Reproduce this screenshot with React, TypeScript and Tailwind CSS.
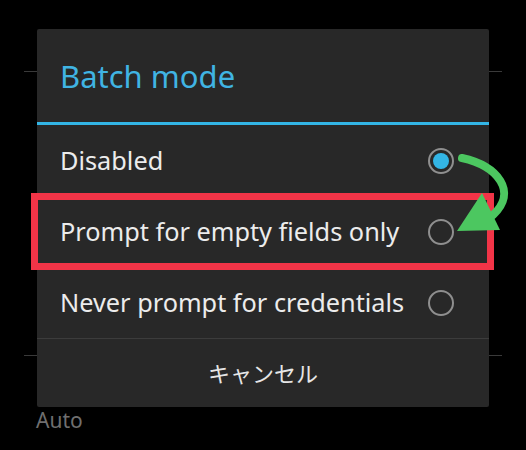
import React from "react";

const font = { fontFamily: '"Noto Sans", "Noto Sans CJK JP", sans-serif' };

function Radio({ checked }: { checked?: boolean }) {
    return (
        <span className="flex h-[26px] w-[26px] items-center justify-center rounded-full border-2 border-[#8f8f8f]">
            {checked && <span className="h-[16px] w-[16px] rounded-full bg-[#33b5e5]" />}
        </span>
    );
}

const options = [
    { label: "Disabled", checked: true },
    { label: "Prompt for empty fields only", checked: false },
    { label: "Never prompt for credentials", checked: false },
];

export default function App() {
    return (
        <div className="relative h-[450px] w-[526px] overflow-hidden bg-black" style={font}>
            {/* settings list behind the dialog */}
            <div className="px-[24px] pt-[71px]">
                <div className="h-px bg-[#3a3a3a]" />
                <div className="h-[283px]" />
                <div className="h-px bg-[#3a3a3a]" />
                <div className="pl-[12px] pt-[50px] text-[21px] leading-[28px] text-[#6f6f6f]">Auto</div>
            </div>

            {/* dialog */}
            <div className="absolute left-[37px] top-[29px] flex w-[452px] flex-col rounded-[2px] bg-[#282828]">
                <div className="flex h-[93px] items-center px-[23px] pt-[2px] text-[31px] text-[#40b4e3]">
                    Batch mode
                </div>
                <div className="h-[3px] bg-[#33b5e5]" />
                {options.map((o) => (
                    <div key={o.label} className="flex h-[71px] items-center justify-between pl-[23px] pr-[35px]">
                        <span className="text-[25.3px] text-[#ececec]">{o.label}</span>
                        <Radio checked={o.checked} />
                    </div>
                ))}
                <div className="h-px bg-[#3c3c3c]" />
                <div className="flex h-[68px] items-center justify-center text-[22px] text-[#e6e6e6]">キャンセル</div>
            </div>

            {/* annotation: red highlight box */}
            <div className="absolute left-[31px] top-[193px] h-[77px] w-[463px] border-[7px] border-[#f23447]" />

            {/* annotation: green arrow */}
            <svg className="absolute left-0 top-0" width="526" height="450" viewBox="0 0 526 450">
                <path d="M462 158 C498 166 518 192 493 215" fill="none" stroke="#4cc760" strokeWidth="8" strokeLinecap="round" />
                <polygon points="482,193 457,231 500,230" fill="#4cc760" />
            </svg>
        </div>
    );
}
